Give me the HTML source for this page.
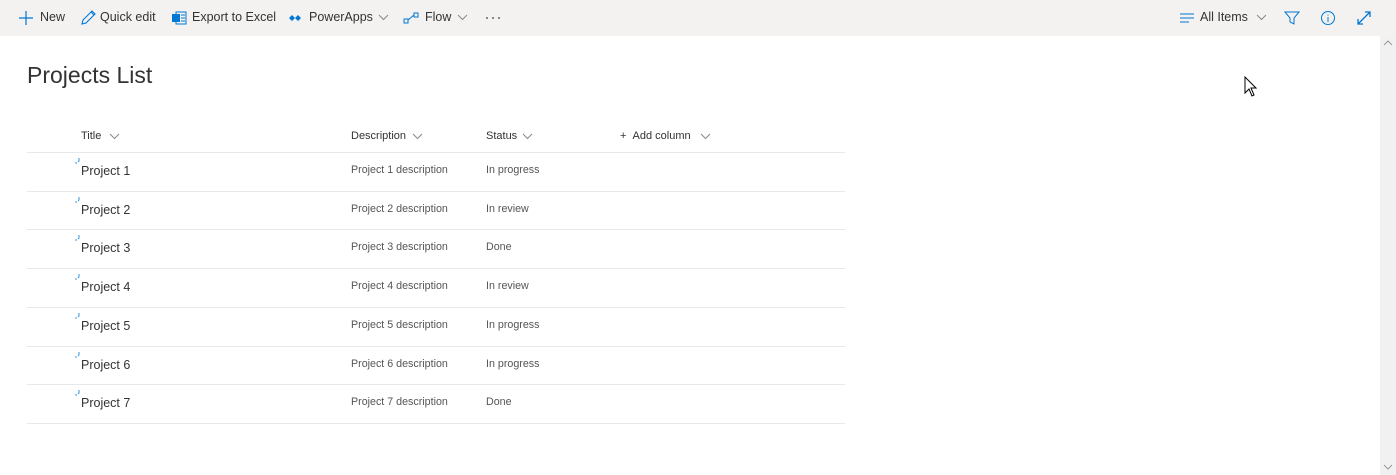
<!DOCTYPE html>
<html><head><meta charset="utf-8"><style>
*{margin:0;padding:0;box-sizing:border-box}
body{width:1396px;height:475px;overflow:hidden;background:#fff;font-family:"Segoe UI","Liberation Sans",sans-serif;color:#333;position:relative}
.tb{position:absolute;left:0;top:0;width:1396px;height:36px;background:#f3f2f1}
.t{position:absolute;top:10px;font-size:12.5px;color:#333;white-space:nowrap}
.ab{position:absolute}
.sb{position:absolute;left:1380px;top:36px;width:16px;height:439px;background:#f1f1f1}
h1{position:absolute;left:27px;top:62px;font-weight:normal;font-size:23px;color:#333;font-family:"Liberation Sans",sans-serif}
.hd{position:absolute;top:130px;font-size:11px;color:#333}
.line{position:absolute;left:27px;width:818px;height:1px;background:#e8e8e8}
.title{position:absolute;left:81px;font-size:12.5px;color:#333}
.c{position:absolute;font-size:10.7px;color:#555}
.mark{position:absolute;left:75px;width:6px;height:6px}
</style></head><body>
<div class="tb">
<svg class="ab" style="left:18px;top:10px" width="16" height="16"><path d="M8 1v14M1 8h14" stroke="#0078d4" stroke-width="1.2"/></svg>
<span class="t" style="left:40px">New</span>
<svg class="ab" style="left:80px;top:10px" width="16" height="16"><path d="M2 14l1-4 9-9 3 3-9 9z M11 2l3 3" stroke="#0078d4" fill="none" stroke-width="1.1"/></svg>
<span class="t" style="left:100px">Quick edit</span>
<svg class="ab" style="left:171px;top:11px" width="16" height="14"><rect x="5" y="1" width="10" height="12" fill="none" stroke="#0078d4"/><rect x="1" y="3" width="8" height="8" fill="#0078d4"/><path d="M10 4h4M10 7h4M10 10h4" stroke="#0078d4"/></svg>
<span class="t" style="left:192px">Export to Excel</span>
<svg class="ab" style="left:289px;top:13px" width="12" height="10"><path d="M0 5l3-3 3 3-3 3zM6 5l3-3 3 3-3 3z" fill="#0078d4"/></svg>
<span class="t" style="left:309px">PowerApps</span>
<svg class="ab" style="left:378px;top:14px" width="11" height="7"><path d="M1 1l4.5 4.5L10 1" stroke="#888" fill="none"/></svg>
<svg class="ab" style="left:403px;top:11px" width="16" height="14"><rect x="1" y="8" width="4" height="4" fill="none" stroke="#0078d4"/><rect x="11" y="2" width="4" height="4" fill="none" stroke="#0078d4"/><path d="M5 9l6-5" stroke="#0078d4"/></svg>
<span class="t" style="left:425px">Flow</span>
<svg class="ab" style="left:457px;top:14px" width="11" height="7"><path d="M1 1l4.5 4.5L10 1" stroke="#888" fill="none"/></svg>
<svg class="ab" style="left:485px;top:16px" width="16" height="4"><circle cx="2" cy="2" r="1" fill="#666"/><circle cx="8" cy="2" r="1" fill="#666"/><circle cx="14" cy="2" r="1" fill="#666"/></svg>
<svg class="ab" style="left:1180px;top:12px" width="14" height="12"><path d="M0 2h14M0 6h14M0 10h9" stroke="#0078d4"/></svg>
<span class="t" style="left:1200px">All Items</span>
<svg class="ab" style="left:1256px;top:14px" width="11" height="7"><path d="M1 1l4.5 4.5L10 1" stroke="#888" fill="none"/></svg>
<svg class="ab" style="left:1284px;top:10px" width="16" height="16"><path d="M1 2h14l-5 6v6l-4-2v-4z" stroke="#0078d4" fill="none"/></svg>
<svg class="ab" style="left:1320px;top:10px" width="16" height="16"><circle cx="8" cy="8" r="6.5" stroke="#0078d4" fill="none"/><path d="M8 7v5M8 4.5v1" stroke="#0078d4"/></svg>
<svg class="ab" style="left:1356px;top:10px" width="16" height="16"><path d="M2 14L14 2M2 9v5h5M9 2h5v5" stroke="#0078d4" fill="none" stroke-width="1.3"/></svg>
</div>
<div class="sb"><svg class="ab" style="left:3px;top:4px" width="10" height="6"><path d="M1 5l4-4 4 4" stroke="#999" fill="none"/></svg><svg class="ab" style="left:3px;top:428px" width="10" height="6"><path d="M1 1l4 4 4-4" stroke="#999" fill="none"/></svg></div>
<svg class="ab" style="left:1244px;top:76px" width="14" height="22"><path d="M1 1v16l4-4 3 7 2-1-3-7h5z" fill="#fff" stroke="#000"/></svg>
<h1>Projects List</h1>
<span class="hd" style="left:81px">Title</span><svg class="ab" style="left:109px;top:133px" width="11" height="7"><path d="M1 1l4.5 4.5L10 1" stroke="#888" fill="none"/></svg>
<span class="hd" style="left:351px">Description</span><svg class="ab" style="left:412px;top:133px" width="11" height="7"><path d="M1 1l4.5 4.5L10 1" stroke="#888" fill="none"/></svg>
<span class="hd" style="left:486px">Status</span><svg class="ab" style="left:522px;top:133px" width="11" height="7"><path d="M1 1l4.5 4.5L10 1" stroke="#888" fill="none"/></svg>
<span class="hd" style="left:620px">+&nbsp;&nbsp;Add column</span><svg class="ab" style="left:700px;top:133px" width="11" height="7"><path d="M1 1l4.5 4.5L10 1" stroke="#888" fill="none"/></svg>
<div class="line" style="top:152px"></div>
<div id="rows"></div>
<script>
var st=["In progress","In review","Done","In review","In progress","In progress","Done"];
var h="";
for(var i=0;i<7;i++){var y=152+i*38.7;
h+='<svg class="mark" style="top:'+(y+6)+'px" viewBox="0 0 6 6"><path d="M0 5h2M4 0v3l-1 1" stroke="#0078d4" fill="none" stroke-width="0.8"/></svg>';
h+='<span class="title" style="top:'+(y+12)+'px">Project '+(i+1)+'</span>';
h+='<span class="c" style="left:351px;top:'+(y+12)+'px">Project '+(i+1)+' description</span>';
h+='<span class="c" style="left:486px;top:'+(y+12)+'px">'+st[i]+'</span>';
h+='<div class="line" style="top:'+Math.round(y+38.7)+'px"></div>';}
document.getElementById("rows").innerHTML=h;
</script>
</body></html>
